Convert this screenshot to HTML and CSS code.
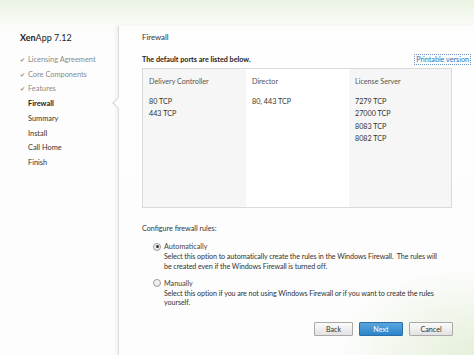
FILE: index.html
```html
<!DOCTYPE html>
<html>
    <head>
        <link rel="stylesheet" href="styles.css">
    </head>
    <body>
        <div class="wizard">
            <div class="sidebar">
                <div class="product"><b>Xen</b>App 7.12</div>
                <ul class="steps">
                    <li class="step done"><span class="tick">&#10004;</span>Licensing Agreement</li>
                    <li class="step done"><span class="tick">&#10004;</span>Core Components</li>
                    <li class="step done"><span class="tick">&#10004;</span>Features</li>
                    <li class="step current">Firewall</li>
                    <li class="step">Summary</li>
                    <li class="step">Install</li>
                    <li class="step">Call Home</li>
                    <li class="step">Finish</li>
                </ul>
            </div>
            <div class="main">
                <div class="notch"></div>
                <div class="title">Firewall</div>
                <div class="ports-head">
                    <span class="ports-label">The default ports are listed below.</span>
                    <a class="print-link">Printable version</a>
                </div>
                <div class="ports">
                    <div class="port-col">
                        <div class="port-name">Delivery Controller</div>
                        <ul class="port-list">
                            <li>80 TCP</li>
                            <li>443 TCP</li>
                        </ul>
                    </div>
                    <div class="port-col">
                        <div class="port-name">Director</div>
                        <ul class="port-list">
                            <li>80, 443 TCP</li>
                        </ul>
                    </div>
                    <div class="port-col">
                        <div class="port-name">License Server</div>
                        <ul class="port-list">
                            <li>7279 TCP</li>
                            <li>27000 TCP</li>
                            <li>8083 TCP</li>
                            <li>8082 TCP</li>
                        </ul>
                    </div>
                </div>
                <div class="rules-label">Configure firewall rules:</div>
                <div class="options">
                    <div class="option">
                        <span class="radio checked"></span>
                        <div class="option-body">
                            <div class="option-name">Automatically</div>
                            <div class="option-desc">Select this option to automatically create the rules in the Windows Firewall.&nbsp; The rules will<br>be created even if the Windows Firewall is turned off.</div>
                        </div>
                    </div>
                    <div class="option">
                        <span class="radio"></span>
                        <div class="option-body">
                            <div class="option-name">Manually</div>
                            <div class="option-desc">Select this option if you are not using Windows Firewall or if you want to create the rules<br>yourself.</div>
                        </div>
                    </div>
                </div>
                <div class="buttons">
                    <button class="btn btn-back">Back</button>
                    <button class="btn btn-next">Next</button>
                    <button class="btn btn-cancel">Cancel</button>
                </div>
            </div>
        </div>
    </body>
</html>
```

FILE: styles.css
```css
* {
    box-sizing: border-box;
}

html, body {
    margin: 0;
    padding: 0;
}

body {
    width: 474px;
    height: 355px;
    overflow: hidden;
    font-family: 'Lato', 'Open Sans', sans-serif;
    font-size: 7.2px;
    color: #3a3a3a;
    background:
        radial-gradient(ellipse 140px 90px at 100% 100%, rgba(226, 238, 214, 0.9), rgba(255, 255, 255, 0)),
        linear-gradient(to bottom, #eaf2e2 0, #f3f8ee 14px, #fbfcf9 26px, #fdfdfd 40px);
}

ul {
    margin: 0;
    padding: 0;
    list-style: none;
}

.wizard {
    display: grid;
    grid-template-columns: 118px 1fr;
    height: 355px;
}

.sidebar {
    padding: 32px 0 0 20px;
}

.product {
    font-size: 9px;
    line-height: 12px;
    color: #222;
}

.product b {
    font-weight: bold;
}

.steps {
    margin-top: 9px;
    font-size: 7.4px;
}

.step {
    line-height: 14.7px;
    padding-left: 8px;
    color: #333;
}

.step.done {
    padding-left: 0;
    color: #8a8a8a;
}

.tick {
    display: inline-block;
    width: 8px;
    font-size: 6px;
    color: #8a8a8a;
}

.step.current {
    font-weight: bold;
    color: #222;
}

.main {
    position: relative;
    margin-top: 26px;
    padding: 5px 4px 0 23px;
    border-left: 1px solid #dcdcdc;
    box-shadow: -2px 0 4px rgba(0, 0, 0, 0.06);
    background: linear-gradient(to bottom, rgba(255, 255, 255, 0.5), rgba(255, 255, 255, 0) 300px);
}

.notch {
    position: absolute;
    left: -5px;
    top: 73px;
    width: 8px;
    height: 8px;
    background: #fff;
    border-left: 1px solid #d4d4d4;
    border-bottom: 1px solid #d4d4d4;
    transform: rotate(45deg);
}

.title {
    font-size: 7.8px;
    line-height: 12px;
    color: #333;
}

.ports-head {
    display: flex;
    justify-content: space-between;
    align-items: center;
    margin-top: 11px;
    height: 11px;
}

.ports-label {
    font-weight: bold;
    color: #222;
}

.print-link {
    color: #2c6fb7;
    outline: 1px dotted #6f93c0;
    padding: 0 1px;
}

.ports {
    display: grid;
    grid-template-columns: 103px 103px 1fr;
    width: 310px;
    height: 140px;
    margin-top: 3px;
    border: 1px solid #dadada;
}

.port-col {
    padding: 7px 6px 0 6px;
    background: #f6f6f6;
}

.port-col:nth-child(2) {
    background: #fff;
}

.port-name {
    line-height: 12px;
    color: #555;
}

.port-list {
    margin-top: 8px;
}

.port-list li {
    line-height: 12.3px;
    color: #333;
}

.rules-label {
    margin-top: 15px;
    line-height: 11px;
    color: #333;
}

.options {
    margin-top: 7px;
    padding-left: 11px;
}

.option {
    display: flex;
    gap: 3px;
    margin-bottom: 6px;
}

.radio {
    flex: none;
    position: relative;
    width: 8px;
    height: 8px;
    margin-top: 1.5px;
    border: 1px solid #9a9a9a;
    border-radius: 50%;
    background: linear-gradient(#fafafa, #e6e6e6);
}

.radio.checked::after {
    content: "";
    position: absolute;
    left: 1.5px;
    top: 1.5px;
    width: 3px;
    height: 3px;
    border-radius: 50%;
    background: #333;
}

.option-name {
    line-height: 11px;
    color: #444;
}

.option-desc {
    line-height: 9.8px;
    letter-spacing: -0.1px;
    color: #333;
}

.buttons {
    display: flex;
    gap: 6px;
    width: 311px;
    justify-content: flex-end;
    margin-top: 14px;
}

.btn {
    height: 14px;
    padding: 0;
    font-family: inherit;
    font-size: 7.2px;
    color: #333;
    border: 1px solid #a9a9a9;
    border-radius: 1px;
    background: linear-gradient(#fbfbfb, #e2e2e2);
}

.btn-back {
    width: 39px;
}

.btn-next {
    width: 44px;
    color: #fff;
    border-color: #2a6fa8;
    background: linear-gradient(#5aa6df, #2b84c8);
}

.btn-cancel {
    width: 44px;
}
```
